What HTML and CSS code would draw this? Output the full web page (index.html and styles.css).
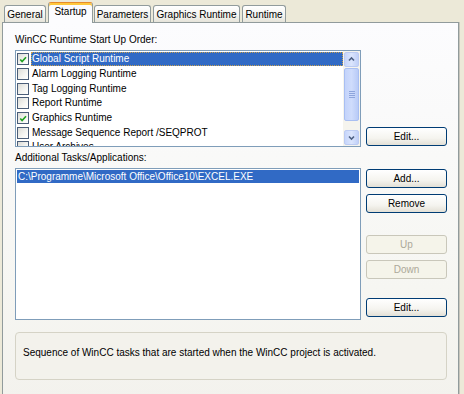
FILE: index.html
```html
<!DOCTYPE html>
<html>
<head>
<meta charset="utf-8">
<link rel="stylesheet" href="styles.css">
</head>
<body>
<div class="dialog">
  <div class="tabs">
    <div class="tab t-general">General</div>
    <div class="tab active t-startup">Startup</div>
    <div class="tab t-params">Parameters</div>
    <div class="tab t-graphics">Graphics Runtime</div>
    <div class="tab t-runtime">Runtime</div>
  </div>
  <div class="page">
    <div class="grid">
      <div class="label">WinCC Runtime Start Up Order:</div>
      <div class="listbox list1">
        <div class="rows">
          <div class="row sel"><span class="cb"><svg viewBox="0 0 11 11" width="11" height="11"><polyline points="2.5,5.5 4.5,7.8 8.8,3" fill="none" stroke="#21a121" stroke-width="1.8"/></svg></span><span class="txt">Global Script Runtime</span></div>
          <div class="row"><span class="cb"></span><span class="txt">Alarm Logging Runtime</span></div>
          <div class="row"><span class="cb"></span><span class="txt">Tag Logging Runtime</span></div>
          <div class="row"><span class="cb"></span><span class="txt">Report Runtime</span></div>
          <div class="row"><span class="cb"><svg viewBox="0 0 11 11" width="11" height="11"><polyline points="2.5,5.5 4.5,7.8 8.8,3" fill="none" stroke="#21a121" stroke-width="1.8"/></svg></span><span class="txt">Graphics Runtime</span></div>
          <div class="row"><span class="cb"></span><span class="txt">Message Sequence Report /SEQPROT</span></div>
          <div class="row"><span class="cb"></span><span class="txt">User Archives</span></div>
        </div>
        <div class="scrollbar">
          <div class="sbtn"><svg viewBox="0 0 13 13" width="13" height="13"><polyline points="4,7.5 6.5,5 9,7.5" fill="none" stroke="#4d6185" stroke-width="1.6"/></svg></div>
          <div class="thumb"><span class="grip"></span><span class="grip"></span><span class="grip"></span><span class="grip"></span></div>
          <div class="track"></div>
          <div class="sbtn"><svg viewBox="0 0 13 13" width="13" height="13"><polyline points="4,5.5 6.5,8 9,5.5" fill="none" stroke="#4d6185" stroke-width="1.6"/></svg></div>
        </div>
      </div>
      <div class="col-edit1"><button class="btn">Edit...</button></div>
      <div class="label label2">Additional Tasks/Applications:</div>
      <div class="listbox list2">
        <div class="row2 sel">C:\Programme\Microsoft Office\Office10\EXCEL.EXE</div>
      </div>
      <div class="col-buttons">
        <button class="btn b-add">Add...</button>
        <button class="btn b-remove">Remove</button>
        <button class="btn b-up" disabled>Up</button>
        <button class="btn b-down" disabled>Down</button>
        <button class="btn b-edit2">Edit...</button>
      </div>
      <div class="desc">Sequence of WinCC tasks that are started when the WinCC project is activated.</div>
    </div>
  </div>
</div>
</body>
</html>
```
FILE: styles.css
```css
html, body {
  margin: 0;
  padding: 0;
  overflow: hidden;
}
body {
  background: #ece9d8;
  font-family: "Liberation Sans", Arial, sans-serif;
  font-size: 10px;
  color: #000;
  width: 464px;
  height: 394px;
}
.dialog {
  display: flex;
  flex-direction: column;
}
.tabs {
  display: flex;
  align-items: flex-end;
  height: 22px;
  padding-left: 4px;
  position: relative;
  z-index: 2;
}
.tab {
  box-sizing: border-box;
  height: 17px;
  border: 1px solid #919b9c;
  border-bottom: none;
  border-radius: 3px 3px 0 0;
  background: linear-gradient(#ffffff, #f3f3ef 60%, #e6e4da);
  display: flex;
  align-items: center;
  justify-content: center;
  line-height: 12px;
  padding-top: 1px;
  margin-right: 2px;
}
.t-general { width: 42px; margin-right: 2px; }
.t-startup { width: 45px; }
.t-params { width: 57px; margin-left: -1px; margin-right: 2px; }
.t-graphics { width: 87px; margin-right: 2px; }
.t-runtime { width: 44px; }
.tab.active {
  height: 21px;
  margin-bottom: -1px;
  background: #fcfcfe;
  border-top: 1px solid #e68b2c;
  box-shadow: inset 0 2px 0 #ffc83c;
  padding-top: 0;
  padding-bottom: 2px;
}
.page {
  box-sizing: border-box;
  margin-left: 2px;
  width: 457px;
  height: 380px;
  border: 1px solid #919b9c;
  box-shadow: 1px 0 0 #c8c6bc;
  background: linear-gradient(#fcfcfe, #f6f6f2 70%, #f3f2ed);
  padding: 10px 0 0 12px;
}
.grid {
  display: grid;
  grid-template-columns: 346px 81px;
  column-gap: 5px;
}
.label {
  grid-column: 1 / 3;
  height: 13px;
  line-height: 13px;
  margin-bottom: 4px;
}
.label2 {
  margin-top: 4px;
}
.listbox {
  box-sizing: border-box;
  border: 1px solid #7f9db9;
  background: #fff;
  overflow: hidden;
}
.list1 {
  height: 97px;
  display: flex;
}
.rows {
  flex: 1;
  padding-top: 1px;
  overflow: hidden;
}
.row {
  display: flex;
  align-items: center;
  height: 14.7px;
}
.cb {
  box-sizing: border-box;
  width: 12px;
  height: 12px;
  margin-left: 1px;
  margin-right: 2px;
  border: 1px solid #4a5d78;
  background: linear-gradient(135deg, #dcdcd7, #f5f5f2 60%, #ffffff);
  display: flex;
  align-items: center;
  justify-content: center;
  flex: none;
}
.cb svg { display: block; }
.txt {
  flex: 1;
  height: 14px;
  line-height: 14px;
  padding-left: 1px;
  white-space: nowrap;
}
.row.sel .txt {
  background: #316ac5;
  color: #fff;
  outline: 1px dotted #c8a050;
  outline-offset: -1px;
}
.scrollbar {
  box-sizing: border-box;
  width: 17px;
  padding: 1px;
  display: flex;
  flex-direction: column;
  background: #f5f4ee;
}
.sbtn {
  box-sizing: border-box;
  height: 15px;
  border: 1px solid #bccbf2;
  border-radius: 2px;
  background: linear-gradient(90deg, #c6d5fb, #dbe5fd 50%, #c0d0f8);
  display: flex;
  align-items: center;
  justify-content: center;
  flex: none;
}
.sbtn svg { display: block; }
.thumb {
  box-sizing: border-box;
  height: 53px;
  margin-top: 1px;
  border: 1px solid #a9bff2;
  border-radius: 2px;
  background: linear-gradient(90deg, #c3d3fb, #cfdcfc 50%, #b9cbf7);
  display: flex;
  flex-direction: column;
  align-items: center;
  justify-content: center;
  gap: 1px;
  flex: none;
}
.grip {
  display: block;
  width: 6px;
  height: 1px;
  background: #8ea5dc;
}
.track {
  flex: 1;
}
.col-edit1 {
  display: flex;
  align-items: flex-end;
  padding-bottom: 1px;
}
.btn {
  box-sizing: border-box;
  width: 81px;
  height: 19px;
  border: 1px solid #003c74;
  border-radius: 3px;
  background: linear-gradient(#ffffff, #f5f4ef 60%, #e3e0d6);
  font-family: "Liberation Sans", Arial, sans-serif;
  font-size: 10px;
  color: #000;
  padding: 0;
  line-height: 17px;
  text-align: center;
}
.btn:disabled {
  border-color: #c9c7ba;
  background: #f5f4ea;
  color: #aca899;
}
.list2 {
  height: 152px;
  padding: 1px;
}
.row2 {
  height: 13px;
  line-height: 13px;
  padding-left: 1px;
  white-space: nowrap;
}
.row2.sel {
  background: #316ac5;
  color: #fff;
}
.col-buttons {
  display: flex;
  flex-direction: column;
  padding-top: 1px;
}
.b-remove { margin-top: 6px; }
.b-up { margin-top: 22px; }
.b-down { margin-top: 6px; }
.b-edit2 { margin-top: 19px; }
.desc {
  grid-column: 1 / 3;
  box-sizing: border-box;
  margin-top: 12px;
  height: 48px;
  border: 1px solid #d5d3c6;
  border-radius: 4px;
  background: #f3f2ec;
  padding: 13px 0 0 7px;
  line-height: 13px;
}
```
